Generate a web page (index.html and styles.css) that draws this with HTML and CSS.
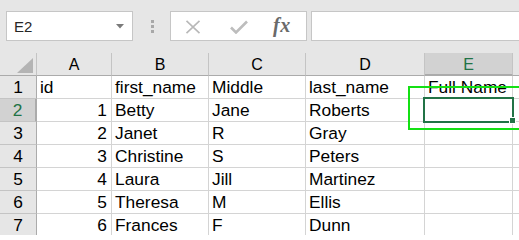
FILE: index.html
```html
<!DOCTYPE html>
<html>
<head>
<meta charset="utf-8">
<link rel="stylesheet" href="styles.css">
</head>
<body>
<div class="app">
  <div class="toolbar">
    <div class="namebox">
      <span class="namebox-text">E2</span>
      <svg class="dropdown" width="8" height="5" viewBox="0 0 8 5"><path d="M0 0 H8 L4 4.5 Z" fill="#7a7a7a"/></svg>
    </div>
    <div class="grip"><span></span><span></span><span></span></div>
    <div class="fxbox">
      <svg class="icon-x" width="16" height="14" viewBox="0 0 16 14"><path d="M1.5 0.8 L14.5 13.2 M14.5 0.8 L1.5 13.2" stroke="#b8b8b8" stroke-width="1.6" fill="none"/></svg>
      <svg class="icon-check" width="18" height="14" viewBox="0 0 18 14"><path d="M1 7.5 L6 12.5 L17 1.5" stroke="#bdbdbd" stroke-width="2.6" fill="none"/></svg>
      <span class="fx">fx</span>
    </div>
    <div class="formulabar"></div>
  </div>
  <div class="sheet">
    <div class="hdr corner"><svg width="16" height="15" viewBox="0 0 16 15"><path d="M16 0 V15 H0 Z" fill="#b4b4b4"/></svg></div>
    <div class="hdr col">A</div>
    <div class="hdr col">B</div>
    <div class="hdr col">C</div>
    <div class="hdr col">D</div>
    <div class="hdr col sel-col">E</div>
    <div class="hdr col last"></div>

    <div class="hdr row">1</div>
    <div class="cell">id</div>
    <div class="cell">first_name</div>
    <div class="cell">Middle</div>
    <div class="cell">last_name</div>
    <div class="cell">Full Name</div>
    <div class="cell last"></div>

    <div class="hdr row sel-row">2</div>
    <div class="cell num">1</div>
    <div class="cell">Betty</div>
    <div class="cell">Jane</div>
    <div class="cell">Roberts</div>
    <div class="cell active"><div class="selection"></div><div class="handle"></div></div>
    <div class="cell last"></div>

    <div class="hdr row">3</div>
    <div class="cell num">2</div>
    <div class="cell">Janet</div>
    <div class="cell">R</div>
    <div class="cell">Gray</div>
    <div class="cell"></div>
    <div class="cell last"></div>

    <div class="hdr row">4</div>
    <div class="cell num">3</div>
    <div class="cell">Christine</div>
    <div class="cell">S</div>
    <div class="cell">Peters</div>
    <div class="cell"></div>
    <div class="cell last"></div>

    <div class="hdr row">5</div>
    <div class="cell num">4</div>
    <div class="cell">Laura</div>
    <div class="cell">Jill</div>
    <div class="cell">Martinez</div>
    <div class="cell"></div>
    <div class="cell last"></div>

    <div class="hdr row">6</div>
    <div class="cell num">5</div>
    <div class="cell">Theresa</div>
    <div class="cell">M</div>
    <div class="cell">Ellis</div>
    <div class="cell"></div>
    <div class="cell last"></div>

    <div class="hdr row">7</div>
    <div class="cell num">6</div>
    <div class="cell">Frances</div>
    <div class="cell">F</div>
    <div class="cell">Dunn</div>
    <div class="cell"></div>
    <div class="cell last"></div>
  </div>
  <div class="annotation"></div>
</div>
</body>
</html>
```

FILE: styles.css
```css
html, body {
  margin: 0;
  padding: 0;
  background: #ffffff;
  overflow: hidden;
}

.app {
  position: relative;
  width: 519px;
  height: 235px;
  overflow: hidden;
  font-family: "Liberation Sans", Arial, sans-serif;
  color: #000;
}

.toolbar {
  height: 53px;
  background: #e6e6e6;
  display: flex;
  align-items: flex-start;
  padding-top: 11px;
  padding-left: 6px;
  box-sizing: border-box;
}

.namebox {
  width: 127px;
  height: 30px;
  box-sizing: border-box;
  background: #fff;
  border: 1px solid #c6c6c6;
  display: flex;
  align-items: center;
  justify-content: space-between;
  padding: 0 8px 0 7px;
}

.namebox-text {
  font-size: 15px;
  color: #262626;
  padding-top: 1px;
}

.dropdown {
  display: block;
  margin-top: 1px;
}

.grip {
  width: 37px;
  height: 30px;
  display: flex;
  flex-direction: column;
  align-items: center;
  justify-content: center;
  gap: 2px;
  padding-left: 1px;
  box-sizing: border-box;
}

.grip span {
  display: block;
  width: 3px;
  height: 3px;
  background: #a8a8a8;
}

.fxbox {
  width: 137px;
  height: 30px;
  box-sizing: border-box;
  background: #fff;
  border: 1px solid #c6c6c6;
  display: flex;
  align-items: center;
  padding-left: 14px;
}

.icon-x {
  display: block;
  margin-top: 1px;
}

.icon-check {
  display: block;
  margin-left: 29px;
  margin-top: 1px;
}

.fx {
  font-family: "Liberation Serif", "Times New Roman", serif;
  font-style: italic;
  font-weight: bold;
  font-size: 20px;
  color: #6a6a6a;
  margin-left: 25px;
  margin-top: -1px;
  letter-spacing: 0.5px;
}

.formulabar {
  flex: 1;
  height: 30px;
  margin-left: 4px;
  box-sizing: border-box;
  background: #fff;
  border: 1px solid #c6c6c6;
  border-right: none;
}

.sheet {
  display: grid;
  grid-template-columns: 37px 75px 97px 97px 119px 88px 1fr;
  grid-auto-rows: 23px;
}

.sheet > div {
  box-sizing: border-box;
  border-right: 1px solid #d4d4d4;
  border-bottom: 1px solid #d4d4d4;
  white-space: nowrap;
  overflow: visible;
}

.hdr {
  background: #e6e6e6;
  color: #000;
}

.sheet > .hdr.col {
  font-size: 16px;
  line-height: 22px;
  padding-top: 1px;
  text-align: center;
  border-right-color: #c4c4c4;
  border-bottom-color: #ababab;
}

.sheet > .corner {
  border-right-color: #c4c4c4;
  border-bottom-color: #ababab;
  display: flex;
  align-items: flex-end;
  justify-content: flex-end;
  padding: 0 3px 2px 0;
}

.corner svg {
  display: block;
}

.sheet > .hdr.row {
  font-size: 17.33px;
  line-height: 21px;
  padding-top: 1px;
  text-align: center;
  border-right-color: #ababab;
  border-bottom-color: #c4c4c4;
}

.sheet > .sel-col {
  background: #d2d2d2;
  color: #217346;
  border-bottom: 2px solid #217346;
}

.sheet > .sel-row {
  background: #d2d2d2;
  color: #217346;
  border-right: 2px solid #217346;
}

.cell {
  font-size: 17.33px;
  line-height: 21px;
  padding: 1px 3px 0 3px;
  background: #fff;
}

.cell.num {
  text-align: right;
  padding-right: 4px;
}

.sheet > .last {
  border-right: none;
}

.active {
  position: relative;
}

.selection {
  position: absolute;
  left: -2px;
  top: -2px;
  width: 91px;
  height: 26px;
  box-sizing: border-box;
  border: 2px solid #217346;
}

.handle {
  position: absolute;
  left: 84px;
  top: 18px;
  width: 5px;
  height: 5px;
  background: #217346;
  border: 1px solid #fff;
}

.annotation {
  position: absolute;
  left: 408px;
  top: 86px;
  width: 140px;
  height: 44px;
  box-sizing: border-box;
  border: 2px solid #14e014;
}
```
